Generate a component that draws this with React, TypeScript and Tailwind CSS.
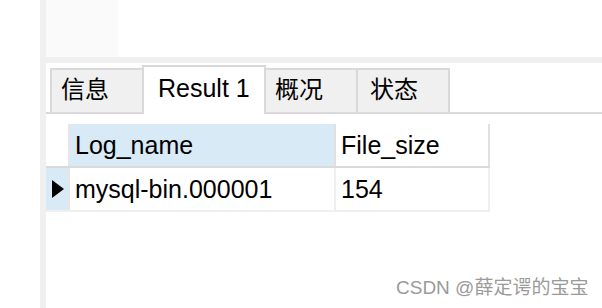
import React from "react";

const font = { fontFamily: "'Liberation Sans', 'Noto Sans CJK SC', sans-serif" };

export default function App() {
  return (
    <div
      className="relative flex w-[602px] h-[308px] bg-white overflow-hidden text-black text-[25px] leading-none"
      style={font}
    >
      <div className="w-[40px] h-full bg-white" />
      <div className="w-[6px] h-full bg-[#f0f0f0]" />
      <div className="flex flex-col flex-1">
        <div className="h-[57px] flex">
          <div className="w-[72px] h-full bg-[#fafafa]" />
        </div>
        <div className="h-[6px] bg-[#f0f0f0]" />
        <div className="h-[51px] flex items-end pl-[4px] border-b-2 border-[#d9d9d9]">
          <div className="w-[92px] h-[44px] bg-[#f0f0f0] border-l-2 border-t-2 border-[#d9d9d9] flex items-center pl-[9px] pb-[2px] text-[24px]">
            信息
          </div>
          <div className="w-[124px] h-[49px] bg-white border-l-2 border-t-2 border-r-2 border-[#d9d9d9] -mb-[2px] flex items-center pl-[14px] pb-[4px]">
            Result 1
          </div>
          <div className="w-[92px] h-[44px] bg-[#f0f0f0] border-t-2 border-r-2 border-[#d9d9d9] flex items-center pl-[9px] pb-[2px] text-[24px]">
            概况
          </div>
          <div className="w-[92px] h-[44px] bg-[#f0f0f0] border-t-2 border-r-2 border-[#d9d9d9] flex items-center pl-[12px] pb-[2px] text-[24px]">
            状态
          </div>
        </div>
        <div className="mt-[10px] w-[444px] flex flex-col">
          <div className="flex h-[44px] border-b-2 border-[#dadada]">
            <div className="w-[24px] h-full bg-white border-r-2 border-[#e6e6e6]" />
            <div className="w-[266px] h-full bg-[#d9eaf7] border-r-2 border-[#e0e0e0] flex items-center pl-[5px]">
              Log_name
            </div>
            <div className="w-[154px] h-full bg-white border-r-2 border-[#e0e0e0] flex items-center pl-[5px]">
              File_size
            </div>
          </div>
          <div className="flex h-[44px] border-b-2 border-[#efefef]">
            <div className="w-[24px] h-full bg-[#d9eaf7] border-r-2 border-[#e6e6e6] flex items-center pl-[6px]">
              <svg width="12" height="18" viewBox="0 0 12 18">
                <polygon points="0,0 12,9 0,18" fill="#000" />
              </svg>
            </div>
            <div className="w-[266px] h-full bg-white border-r-2 border-[#efefef] flex items-center pl-[5px]">
              mysql-bin.000001
            </div>
            <div className="w-[154px] h-full bg-white border-r-2 border-[#efefef] flex items-center pl-[5px]">
              154
            </div>
          </div>
        </div>
      </div>
      <div className="absolute left-[396px] top-[278px] text-[19px] text-[#9a9a9a] whitespace-nowrap">
        CSDN @薛定谔的宝宝
      </div>
    </div>
  );
}
